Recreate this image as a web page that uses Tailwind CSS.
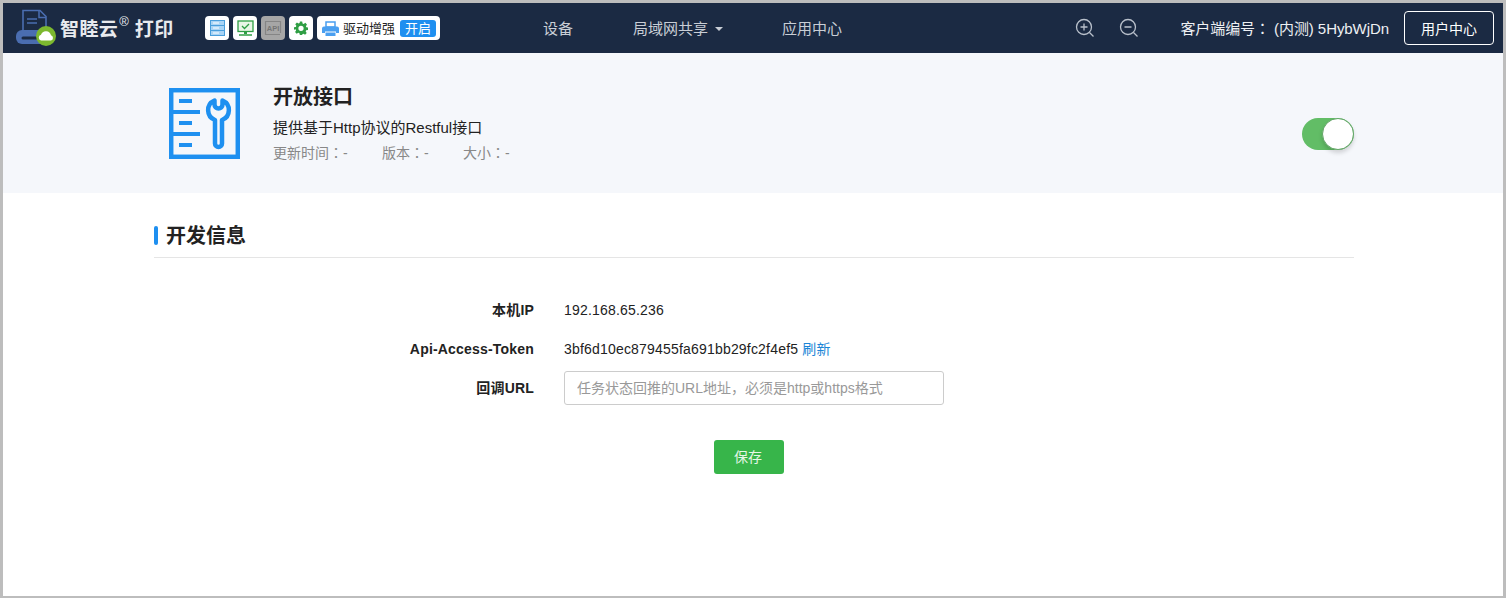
<!DOCTYPE html>
<html lang="en">
<head>
<meta charset="UTF-8">
<title>开放接口</title>
<script src="https://cdn.jsdelivr.net/npm/@tailwindcss/browser@4"></script>
</head>
<body class="bg-white">
<div class="h-[598px] w-[1506px] overflow-hidden border-[3px] border-b-2 border-[#bdbdbd] bg-white font-['Liberation_Sans','Noto_Sans_CJK_SC',sans-serif] text-[14px] text-[#222]">
  <!-- Top bar -->
  <header class="flex h-[50px] items-center bg-[#1b2a43] text-white">
    <div class="ml-[13px] flex w-[189px] items-center">
      <svg class="h-[40px] w-[42px] shrink-0" viewBox="0 0 42 40">
        <path d="M7 24V2.500h17l6 6V24" fill="none" stroke="#4a6db0" stroke-width="1.600"/>
        <path d="M23 3v6.500h7" fill="none" stroke="#4a6db0" stroke-width="1.500"/>
        <path d="M11 11h10M11 15h10" stroke="#4a6db0" stroke-width="1.300"/>
        <path d="M6 22h20v14H6a6 6 0 0 1-6-6v-2a6 6 0 0 1 6-6z" fill="#4a6db0"/>
        <path d="M7 30h16" stroke="#1b2a43" stroke-width="3" stroke-linecap="round"/>
        <circle cx="30" cy="28" r="10" fill="#7cb82f"/>
        <path d="M25 32.500a3 3 0 0 1 0-5.800 5.200 5.200 0 0 1 10 .6 2.700 2.700 0 0 1 0 5.200z" fill="#fff"/>
      </svg>
      <span class="ml-[2px] whitespace-nowrap pt-[3px] text-[19px] leading-none font-bold tracking-[0.4px] text-[#e8eaee]">智睦云<sup class="relative -top-[3px] ml-[1px] align-super text-[13px] font-normal">®</sup> 打印</span>
    </div>
    <div class="flex items-center gap-[4px]">
      <span class="flex h-[24px] w-[24px] items-center justify-center rounded-[4px] bg-white">
        <svg class="h-[16px] w-[15px]" viewBox="0 0 15 16"><rect x="0.500" y="0.500" width="14" height="15" fill="#a9d4f5" stroke="#4a9fdc"/><path d="M1 5.500h13M1 10.500h13" stroke="#4a9fdc"/><path d="M3 3h6M3 8h6M3 13h6" stroke="#fff" stroke-width="1.200"/></svg>
      </span>
      <span class="flex h-[24px] w-[24px] items-center justify-center rounded-[4px] bg-white">
        <svg class="h-[16px] w-[17px]" viewBox="0 0 17 16"><rect x="1" y="1" width="15" height="10.500" fill="#e9f6e6" stroke="#2f9e44" stroke-width="1.300"/><path d="M5 6l2.500 2.500L12 4" fill="none" stroke="#2f9e44" stroke-width="1.300"/><path d="M7 12v2h3v-2z" fill="#2f9e44"/><path d="M2 15h13" stroke="#2f9e44" stroke-width="1.500"/></svg>
      </span>
      <span class="flex h-[24px] w-[24px] items-center justify-center rounded-[4px] bg-[#a6a6a6]">
        <svg class="h-[18px] w-[18px]" viewBox="0 0 18 18"><path d="M1.500 16V2.500h15V14" fill="none" stroke="#858585" stroke-width="1.200"/><path d="M2 15.500h14" stroke="#858585"/><text x="9" y="11.500" text-anchor="middle" font-size="7.500" font-weight="700" fill="#757575" font-family="Liberation Sans">API</text></svg>
      </span>
      <span class="flex h-[24px] w-[24px] items-center justify-center rounded-[4px] bg-white">
        <svg class="h-[14px] w-[14px]" viewBox="0 0 24 24"><path fill="#2f9e44" fill-rule="evenodd" d="M10 1h4l.7 3.200 1.900.8 2.800-1.800 2.800 2.800L20.400 8.800l.8 1.900 2.800.6v4l-3.200.7-.8 1.900 1.800 2.800-2.800 2.800-2.800-1.800-1.900.8L14 24h-4l-.7-3.200-1.900-.8-2.800 1.800-2.800-2.800 1.800-2.800-.8-1.900L0 14.800v-4l3.200-.7.800-1.900L2.200 5.400 5 2.600l2.800 1.800 1.900-.8zM12 8a4.500 4.500 0 1 0 0 9 4.500 4.500 0 0 0 0-9z"/></svg>
      </span>
      <span class="flex h-[24px] w-[123px] items-center rounded-[4px] bg-white pl-[5px] text-[13px] text-[#222]">
        <svg class="h-[15px] w-[17px] shrink-0" viewBox="0 0 17 15"><path d="M4 6V1h9v5z" fill="#fff" stroke="#4a9ff0" stroke-width="1.500"/><path d="M2 5.500h13a2 2 0 0 1 2 2V12h-3v-1.500H3V12H0V7.500a2 2 0 0 1 2-2z" fill="#4a9ff0"/><path d="M3.500 11.500h10V15h-10z" fill="#4a9ff0"/></svg>
        <span class="ml-[4px] whitespace-nowrap pt-[2px]">驱动增强</span>
        <span class="ml-[5px] flex h-[17px] w-[36px] items-center justify-center rounded-[3px] bg-[#1e8ff0] pt-[1px] text-[13px] text-white">开启</span>
      </span>
    </div>
    <nav class="ml-[103px] flex items-center pt-[2px] text-[15px] text-[#c9ced6]">
      <a class="w-[30px] whitespace-nowrap">设备</a>
      <a class="ml-[60px] flex items-center whitespace-nowrap">局域网共享<span class="ml-[7px] h-0 w-0 border-x-[4px] border-t-[4px] border-x-transparent border-t-[#c9ced6]"></span></a>
      <a class="ml-[59px] whitespace-nowrap">应用中心</a>
    </nav>
    <div class="ml-auto flex items-center">
      <svg class="h-[20px] w-[20px]" viewBox="0 0 20 20" fill="none" stroke="#b9c0cb" stroke-width="1.300"><circle cx="9" cy="9" r="7.500"/><path d="M14.500 14.500L18.500 18.500M9 5.500v7M5.500 9h7"/></svg>
      <svg class="ml-[24px] h-[20px] w-[20px]" viewBox="0 0 20 20" fill="none" stroke="#b9c0cb" stroke-width="1.300"><circle cx="9" cy="9" r="7.500"/><path d="M14.500 14.500L18.500 18.500M5.500 9h7"/></svg>
      <span class="ml-[41px] whitespace-nowrap pt-[2px] text-[15px] tracking-[-0.07px] text-[#eef0f3]">客户端编号<span class="font-['Noto_Sans_CJK_TC',sans-serif]">：</span> (内测) 5HybWjDn</span>
      <a class="mr-[9px] ml-[15px] flex h-[34px] w-[90px] items-center justify-center rounded-[4px] border border-white pt-[2px] text-[14px] text-white">用户中心</a>
    </div>
  </header>
  <!-- Plugin summary -->
  <section class="flex h-[140px] items-center bg-[#f5f7fb] pr-[149px] pl-[166px]">
    <svg class="h-[71px] w-[71px] shrink-0" viewBox="0 0 71 71" fill="none">
      <rect x="2.200" y="2.200" width="66.600" height="66.600" stroke="#1e90f0" stroke-width="4.500"/>
      <path d="M10 13h13M4 24h27M10 35h13M4 46h27M10 57h13" stroke="#1e90f0" stroke-width="4"/>
      <path d="M45.500 12.500v4a4 4 0 0 0 8 0v-4A10.500 10.500 0 0 1 53 32v23.500a3.500 3.500 0 0 1-7 0V32A10.500 10.500 0 0 1 45.500 12.500z" stroke="#1e90f0" stroke-width="4.500" stroke-linejoin="round"/>
    </svg>
    <div class="mt-[32px] ml-[33px] self-start">
      <h1 class="text-[20px] leading-[24px] font-bold text-[#222]">开放接口</h1>
      <p class="mt-[9px] text-[15px] leading-[20px] text-[#222]">提供基于Http协议的Restful接口</p>
      <div class="mt-[4px] flex text-[14px] leading-[20px] text-[#888]">
        <span class="w-[109px]">更新时间<span class="font-['Noto_Sans_CJK_TC',sans-serif]">：</span>-</span>
        <span class="w-[81px]">版本<span class="font-['Noto_Sans_CJK_TC',sans-serif]">：</span>-</span>
        <span>大小<span class="font-['Noto_Sans_CJK_TC',sans-serif]">：</span>-</span>
      </div>
    </div>
    <div class="relative mt-[22px] ml-auto h-[32px] w-[52px] rounded-full bg-[#62bd66]">
      <span class="absolute top-0 right-0 h-[32px] w-[32px] rounded-full border border-[#62a566] bg-white shadow-[0_3px_4px_rgba(0,0,0,0.15)]"></span>
    </div>
  </section>
  <!-- Developer info -->
  <main class="mx-[151px] w-[1200px]">
    <div class="flex h-[65px] items-center border-b border-[#e5e5e5] pt-[20px]">
      <span class="h-[19px] w-[4px] rounded-[2px] bg-[#1e8ff0]"></span>
      <h2 class="ml-[8px] pt-[2px] text-[20px] font-bold text-[#222]">开发信息</h2>
    </div>
    <div class="mt-[32px] text-[14px] tracking-[0.19px]">
      <div class="flex h-[39px] items-center">
        <span class="w-[380px] pt-[2px] text-right font-bold">本机IP</span>
        <span class="ml-[30px] pt-[2px]">192.168.65.236</span>
      </div>
      <div class="flex h-[39px] items-center">
        <span class="w-[380px] pt-[2px] text-right font-bold">Api-Access-Token</span>
        <span class="ml-[30px] pt-[2px]">3bf6d10ec879455fa691bb29fc2f4ef5 <a class="text-[#1b85d6]">刷新</a></span>
      </div>
      <div class="flex h-[39px] items-center">
        <span class="w-[380px] pt-[2px] text-right font-bold">回调URL</span>
        <input class="ml-[30px] h-[34px] w-[380px] rounded-[3px] border border-[#ccc] px-[12px] text-[14px] tracking-normal placeholder:text-[#999]" placeholder="任务状态回推的URL地址，必须是http或https格式">
      </div>
      <div class="mt-[33px] pl-[560px]">
        <button class="h-[34px] w-[70px] rounded-[3px] bg-[#37b54a] pr-[2px] text-[14px] tracking-normal text-[#e5f5e7]">保存</button>
      </div>
    </div>
  </main>
</div>
</body>
</html>
